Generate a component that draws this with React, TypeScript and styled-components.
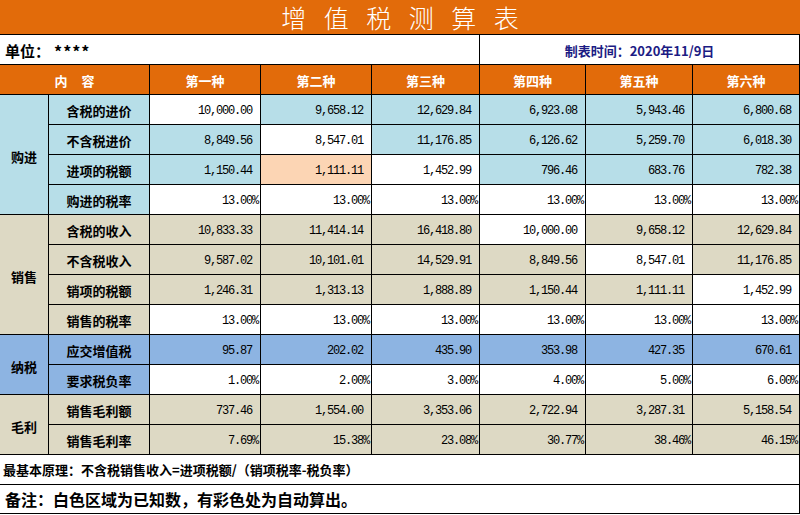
import React from "react";
import styled, { createGlobalStyle } from "styled-components";

const GlobalStyle = createGlobalStyle`
  html, body { margin: 0; padding: 0; background: #ffffff; }
  body { width: 800px; height: 515px; overflow: hidden; }
`;

const C = {
  orange: "#E26B0A",
  lightBlue: "#B7DEE8",
  tan: "#DDD9C4",
  blue: "#8DB4E2",
  peach: "#FCD5B4",
  white: "#FFFFFF",
};

type Bg = "w" | "b" | "t" | "n" | "p";
const bgMap: Record<Bg, string> = {
  w: C.white,
  b: C.lightBlue,
  t: C.tan,
  n: C.blue,
  p: C.peach,
};

const Sheet = styled.div`
  display: grid;
  grid-template-columns: 49px 101px 111px 111px 108px 106px 107px 107px;
  grid-template-rows: 35px 30px 30px repeat(12, 30px) 30px 29px;
  width: 800px;
  font-family: "Noto Sans CJK SC", "Liberation Sans", sans-serif;
  color: #000;
`;

const Cell = styled.div<{ $bg?: string; $rows?: number }>`
  box-sizing: border-box;
  border-right: 1px solid #000;
  border-bottom: 1px solid #000;
  background: ${(p) => p.$bg || "#fff"};
  display: flex;
  align-items: center;
  white-space: nowrap;
  min-width: 0;
  ${(p) => (p.$rows ? `grid-row: span ${p.$rows};` : "")}
`;

const TitleBar = styled(Cell)`
  grid-column: 1 / -1;
  border-right: none;
  background: ${C.orange};
  justify-content: center;
  color: #fff;
  font-size: 25px;
  line-height: 1.2;
  font-weight: 300;
  word-spacing: 12px;
`;

const UnitCell = styled(Cell)`
  grid-column: 1 / 6;
  padding-left: 5px;
  font-size: 15px;
  font-weight: 700;
  padding-top: 2px;
`;

const Stars = styled.span`
  margin-left: 4px;
  letter-spacing: 1px;
  font-size: 16px;
`;

const DateCell = styled(Cell)`
  grid-column: 6 / 9;
  justify-content: center;
  color: #1c1c84;
  font-size: 13px;
  font-weight: 700;
  padding-top: 1px;
`;

const HeadCell = styled(Cell)<{ $wide?: boolean }>`
  grid-column: span ${(p) => (p.$wide ? 2 : 1)};
  background: ${C.orange};
  color: #fff;
  justify-content: center;
  font-size: 13px;
  font-weight: 700;
  word-spacing: 11px;
  padding-top: 1px;
`;

const GroupCell = styled(Cell)`
  justify-content: center;
  font-size: 13px;
  font-weight: 700;
  padding-top: 3px;
`;

const LabelCell = styled(Cell)`
  justify-content: center;
  font-size: 13px;
  font-weight: 700;
  padding-top: 2px;
`;

const ValueCell = styled(Cell)<{ $pct?: boolean }>`
  justify-content: flex-end;
  font-family: "Liberation Mono", "DejaVu Sans Mono", monospace;
  font-size: 12px;
  letter-spacing: -1.2px;
  padding-right: ${(p) => (p.$pct ? "2px" : "8px")};
  padding-top: 2px;
`;

const NoteLine = styled(Cell)<{ $size: number; $weight: number }>`
  grid-column: 1 / -1;
  padding-left: ${(p) => (p.$size > 14 ? 5 : 3)}px;
  font-size: ${(p) => p.$size}px;
  font-weight: ${(p) => p.$weight};
`;

type Row = { label: string; vals: string[]; bg: Bg[]; pct?: boolean };
type Group = { name: string; color: Bg; rows: Row[] };

const all = (b: Bg): Bg[] => [b, b, b, b, b, b];

const groups: Group[] = [
  {
    name: "购进",
    color: "b",
    rows: [
      { label: "含税的进价", vals: ["10,000.00", "9,658.12", "12,629.84", "6,923.08", "5,943.46", "6,800.68"], bg: ["w", "b", "b", "b", "b", "b"] },
      { label: "不含税进价", vals: ["8,849.56", "8,547.01", "11,176.85", "6,126.62", "5,259.70", "6,018.30"], bg: ["b", "w", "b", "b", "b", "b"] },
      { label: "进项的税额", vals: ["1,150.44", "1,111.11", "1,452.99", "796.46", "683.76", "782.38"], bg: ["b", "p", "w", "b", "b", "b"] },
      { label: "购进的税率", vals: ["13.00%", "13.00%", "13.00%", "13.00%", "13.00%", "13.00%"], bg: all("w"), pct: true },
    ],
  },
  {
    name: "销售",
    color: "t",
    rows: [
      { label: "含税的收入", vals: ["10,833.33", "11,414.14", "16,418.80", "10,000.00", "9,658.12", "12,629.84"], bg: ["t", "t", "t", "w", "t", "t"] },
      { label: "不含税收入", vals: ["9,587.02", "10,101.01", "14,529.91", "8,849.56", "8,547.01", "11,176.85"], bg: ["t", "t", "t", "t", "w", "t"] },
      { label: "销项的税额", vals: ["1,246.31", "1,313.13", "1,888.89", "1,150.44", "1,111.11", "1,452.99"], bg: ["t", "t", "t", "t", "t", "w"] },
      { label: "销售的税率", vals: ["13.00%", "13.00%", "13.00%", "13.00%", "13.00%", "13.00%"], bg: all("w"), pct: true },
    ],
  },
  {
    name: "纳税",
    color: "n",
    rows: [
      { label: "应交增值税", vals: ["95.87", "202.02", "435.90", "353.98", "427.35", "670.61"], bg: all("n") },
      { label: "要求税负率", vals: ["1.00%", "2.00%", "3.00%", "4.00%", "5.00%", "6.00%"], bg: all("w"), pct: true },
    ],
  },
  {
    name: "毛利",
    color: "t",
    rows: [
      { label: "销售毛利额", vals: ["737.46", "1,554.00", "3,353.06", "2,722.94", "3,287.31", "5,158.54"], bg: all("t") },
      { label: "销售毛利率", vals: ["7.69%", "15.38%", "23.08%", "30.77%", "38.46%", "46.15%"], bg: all("t"), pct: true },
    ],
  },
];

const heads = ["第一种", "第二种", "第三种", "第四种", "第五种", "第六种"];

export default function App() {
  return (
    <>
      <GlobalStyle />
      <Sheet>
        <TitleBar>增 值 税 测 算 表</TitleBar>
        <UnitCell>
          单位：<Stars>****</Stars>
        </UnitCell>
        <DateCell>制表时间：2020年11/9日</DateCell>
        <HeadCell $wide>内 容</HeadCell>
        {heads.map((h) => (
          <HeadCell key={h}>{h}</HeadCell>
        ))}
        {groups.map((g) =>
          g.rows.map((r, i) => (
            <React.Fragment key={r.label}>
              {i === 0 && (
                <GroupCell $bg={bgMap[g.color]} $rows={g.rows.length}>
                  {g.name}
                </GroupCell>
              )}
              <LabelCell $bg={bgMap[g.color]}>{r.label}</LabelCell>
              {r.vals.map((v, j) => (
                <ValueCell key={j} $bg={bgMap[r.bg[j]]} $pct={r.pct}>
                  {v}
                </ValueCell>
              ))}
            </React.Fragment>
          ))
        )}
        <NoteLine $size={13} $weight={700}>
          最基本原理：不含税销售收入=进项税额/（销项税率-税负率）
        </NoteLine>
        <NoteLine $size={16} $weight={700}>
          备注：白色区域为已知数，有彩色处为自动算出。
        </NoteLine>
      </Sheet>
    </>
  );
}
